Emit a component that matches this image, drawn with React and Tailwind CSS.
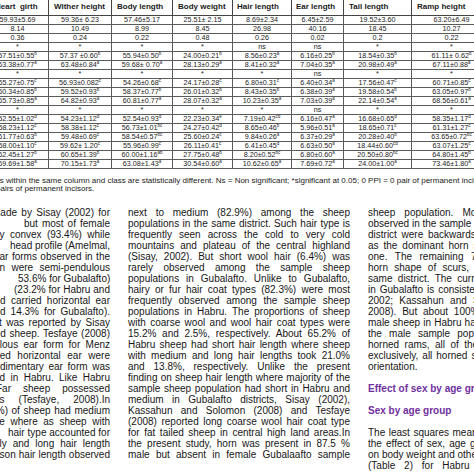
const HEADERS = [
  ["Heart  girth", "pl-[8px]"],
  ["Wither height", "pl-[5px]"],
  ["Body length", "pl-[5px]"],
  ["Body weight", "pl-[5px]"],
  ["Hair length", "pl-[4px]"],
  ["Ear length", "pl-[4px]"],
  ["Tail length", "pl-[5px]"],
  ["Ramp height", "pl-[5px]"],
];

const COL_WIDTHS = ["w-[62px]", "w-[63px]", "w-[61px]", "w-[60px]", "w-[59px]", "w-[52px]", "w-[68px]", "w-[80px]"];

const ROWS = [
  ["59.93±5.69", "59.36± 6.23", "57.46±5.17", "25.51± 2.15", "8.69±2.34", "6.45±2.59", "19.52±3.60", "63.20±6.49"],
  ["8.14", "10.49", "8.99", "8.45", "26.98", "40.16", "18.45", "10.27"],
  ["0.36", "0.24", "0.22", "0.48", "0.26", "0.02", "0.2", "0.22"],
  ["*", "*", "*", "*", "ns", "ns", "*", "*"],
  ["57.51±0.55|b", "57.37 ±0.60|b", "55.94±0.50|b", "24.00±0.21|b", "8.56±0.23|a", "6.16±0.25|b", "18.54±0.35|b", "61.11± 0.62|b"],
  ["63.38±0.77|a", "63.48±0.84|a", "59.68± 0.70|a", "28.13±0.29|a", "8.41±0.32|a", "7.04±0.35|a", "20.98±0.49|a", "67.11±0.88|a"],
  ["*", "*", "*", "*", "*", "ns", "*", "*"],
  ["65.27±0.75|c", "56.93±0.082|c", "54.26±0.68|c", "24.17±0.28|c", "6.80±0.31|c", "6.40±0.34|a", "17.56±0.47|c", "60.71±0.85|c"],
  ["60.34±0.85|b", "59.52±0.93|b", "58.37±0.77|b", "26.01±0.32|b", "8.43±0.35|b", "6.38±0.39|a", "19.58±0.54|b", "63.05±0.97|b"],
  ["65.73±0.85|a", "64.82±0.93|a", "60.81±0.77|a", "28.07±0.32|a", "10.23±0.35|a", "7.03±0.39|a", "22.14±0.54|a", "68.56±0.61|a"],
  ["*", "*", "*", "*", "*", "ns", "*", "*"],
  ["52.55±1.02|d", "54.23±1.12|d", "52.54±0.93|d", "22.23±0.34|e", "7.19±0.42|cd", "6.16±0.47|a", "16.68±0.65|d", "58.35±1.17|d"],
  ["58.23±1.12|c", "58.38±1.12|c", "56.73±1.01|bc", "24.27±0.42|d", "8.65±0.46|b", "5.96±0.51|a", "18.65±0.71|c", "61.31±1.27|c"],
  ["61.77±0.63|b", "59.48±0.69|c", "58.54±0.57|bc", "25.60±0.24|c", "9.84±0.26|a", "6.37±0.29|a", "20.28±0.40|b", "63.65±0.72|bc"],
  ["58.00±1.10|c", "59.62± 1.20|c", "55.96±0.99|c", "26.11±0.41|c", "6.41±0.45|d", "6.63±0.50|a", "18.44±0.60|cd", "63.07±1.25|c"],
  ["62.45±1.27|b", "60.65±1.39|b", "60.00±1.16|ab", "27.75±0.48|b", "8.20±0.52|bc", "6.80±0.60|a", "20.50±0.80|bc", "64.80±1.45|b"],
  ["69.69±1.58|a", "70.15±1.73|a", "63.08±1.43|a", "30.54±0.60|a", "10.62±0.65|a", "7.69±0.72|a", "24.00±1.00|a", "73.46±1.80|a"],
];

// left column is cropped by the screenshot: each line starts where its first word falls
const COL_ONE = [
  ["ml-[-8px]", "made by Sisay (2002) for"],
  ["ml-[24px]", "but most of female"],
  ["ml-[-26px]", "slightly convex (93.4%) while"],
  ["ml-[10px]", "head profile (Amelmal,"],
  ["ml-[-6px]", "ear forms observed in the"],
  ["ml-[-41px]", "population were semi-pendulous"],
  ["ml-[18px]", "53.6% for Gubalafto)"],
  ["ml-[14px]", "(23.2% for Habru and"],
  ["ml-[-11px]", "and carried horizontal ear"],
  ["ml-[-11px]", "and 14.3% for Gubalafto)."],
  ["ml-[-15px]", "that was reported by Sisay"],
  ["ml-[-18px]", "tailed sheep. Tesfaye (2008)"],
  ["ml-[-28px]", "pendulous ear form for Menz"],
  ["ml-[-37px]", "possessed horizontal ear were"],
  ["ml-[-9px]", "rudimentary ear form was"],
  ["ml-[-36px]", "observed in Habru. Like Habru"],
  ["ml-[-4px]", "Far sheep possessed"],
  ["ml-[-15px]", "ears (Tesfaye, 2008).In"],
  ["ml-[-27px]", "(70.1%) of sheep had medium"],
  ["ml-[-14px]", "type where as sheep with"],
  ["ml-[8px]", "hair type accounted for"],
  ["ml-[-46px]", "respectively and long hair length"],
  ["ml-[-36px]", "comparison hair length observed"],
];

const COL_TWO = [
  "next to medium (82.9%) among the sheep",
  "populations in the same district. Such hair type is",
  "frequently seen across the cold to very cold",
  "mountains and plateau of the central highland",
  "(Sisay, 2002). But short wool hair (6.4%) was",
  "rarely observed among the sample sheep",
  "populations in Gubalafto. Unlike to Gubalafto,",
  "hairy or fur hair coat types (82.3%) were most",
  "frequently observed among the sample sheep",
  "populations in Habru. The proportions of sheep",
  "with coarse wool and wool hair coat types were",
  "15.2% and 2.5%, respectively. About 65.2% of",
  "Habru sheep had short hair length where sheep",
  "with medium and long hair lengths took 21.0%",
  "and 13.8%, respectively. Unlike the present",
  "finding on sheep hair length where majority of the",
  "sample sheep population had short in Habru and",
  "medium in Gubalafto districts, Sisay (2002),",
  "Kassahun and Solomon (2008) and Tesfaye",
  "(2008) reported long coarse wool hair coat type",
  "for fat tailed sheep in central high land areas.In",
  "the present study, horn was present in 87.5 %",
  "male but absent in female Gubalaafto sample",
];

const COL_THREE_TOP = [
  "sheep population. Most of the horn shape",
  "observed in the sample sheep population in Habru",
  "district were backwards and spiral (57.1%) horn",
  "as the dominant horn shape followed by lateral",
  "one. The remaining 7.1% of sheep had the",
  "horn shape of scurs, spiral and lateral in the",
  "same district. The current result of horn shape",
  "in Gubalafto is consistent with the results (Sisay,",
  "2002; Kassahun and Solomon, 2008; Tesfaye,",
  "2008). But about 100% (Habru) and 87.5% of",
  "male sheep in Habru had horn. In Gubalafto all of",
  "the male sample population were polled and",
  "horned rams, all of them were found in Habru",
  "exclusively, all horned sheep had backward horn",
];

const COL_THREE_BOTTOM = [
  "The least squares means and standard errors for",
  "the effect of sex, age group and their interaction",
  "on body weight and other linear body measurements",
  "(Table 2) for Habru and Gubalafto districts",
];

function Cell({ value }) {
  const [text, sup] = value.split("|");
  return (
    <td className="h-[9px] border-x border-b border-[#5a5a5a] p-0 text-center text-[7.2px] leading-none text-[#222]">
      {text}
      {sup && <sup className="top-[-3px] text-[4.5px]">{sup}</sup>}
    </td>
  );
}

function Line({ children, className = "", last }) {
  return (
    <p
      className={`h-[11px] whitespace-nowrap ${className} ${
        last ? "text-left" : "text-justify [text-align-last:justify]"
      }`}
    >
      {children}
    </p>
  );
}

export default function App() {
  return (
    <div className="relative h-[474px] w-[474px] overflow-hidden bg-white font-['Liberation_Sans',Arial,sans-serif] text-[#161616]">
      {/* Table 1 (cropped) */}
      <table className="ml-[-14px] w-[505px] min-w-[505px] table-fixed border-collapse">
        <colgroup>
          {COL_WIDTHS.map((w) => (
            <col key={w} className={w} />
          ))}
        </colgroup>
        <thead>
          <tr className="h-[15px]">
            {HEADERS.map(([h, pad]) => (
              <th
                key={h}
                className={`whitespace-pre border-x border-b border-[#444] p-0 ${pad} text-left text-[8px] font-bold leading-none text-[#1a1a1a]`}
              >
                {h}
              </th>
            ))}
          </tr>
        </thead>
        <tbody>
          {ROWS.map((row, i) => (
            <tr key={i}>
              {row.map((v, j) => (
                <Cell key={j} value={v} />
              ))}
            </tr>
          ))}
        </tbody>
      </table>

      {/* Table footnote */}
      <div className="mt-[8px] text-[8px] leading-[8.5px] text-[#1a1a1a]">
        <p className="ml-[-113px] whitespace-nowrap">
          Means with different superscripts within the same column and class are statistically different. Ns = Non
          significant; *significant at 0.05; 0 PPI = 0 pair of permanent incisors; 1 PPI = 1 pair of permanent
        </p>
        <p className="ml-[-4px] whitespace-nowrap">pairs of permanent incisors.</p>
      </div>

      {/* Body text, three columns */}
      <div className="mt-[13px] grid grid-cols-[110px_222px_222px] gap-x-[18px] text-[10px] leading-[11px]">
        <div>
          {COL_ONE.map(([ml, t]) => (
            <Line key={t} className={ml}>
              {t}
            </Line>
          ))}
        </div>
        <div>
          {COL_TWO.map((t) => (
            <Line key={t}>{t}</Line>
          ))}
        </div>
        <div>
          {COL_THREE_TOP.map((t) => (
            <Line key={t}>{t}</Line>
          ))}
          <Line last>orientation.</Line>
          <h3 className="mt-[11px] h-[11px] whitespace-nowrap font-bold text-[#7030a0]">
            Effect of sex by age group and district
          </h3>
          <h4 className="mt-[11px] h-[11px] whitespace-nowrap font-bold text-[#7030a0]">Sex by age group</h4>
          <div className="mt-[11px]">
            {COL_THREE_BOTTOM.map((t) => (
              <Line key={t}>{t}</Line>
            ))}
          </div>
        </div>
      </div>
    </div>
  );
}
